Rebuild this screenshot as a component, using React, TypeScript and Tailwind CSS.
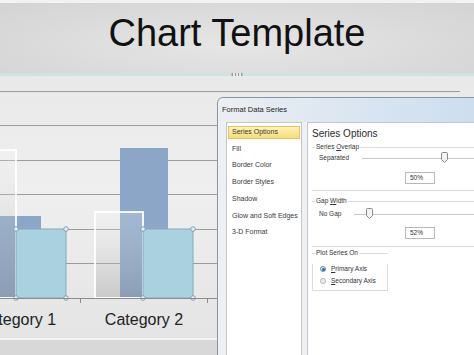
import React from 'react';

// ------------------------------------------------------------
// チャート（スライド上の棒グラフ）
// ------------------------------------------------------------
const gridLines = [91.5, 125.5, 160.5, 194.5, 229.5, 263.5];

const categories = [
  { label: 'Category 1', center: 17, s1: 150, s2: 216 },
  { label: 'Category 2', center: 144, s1: 212, s2: 148 },
];

function SlideChart() {
  return (
    <svg width={474} height={262} viewBox="0 76 474 262" className="block">
      <defs>
        <linearGradient id="glass" x1="0" y1="0" x2="0" y2="1">
          <stop offset="0%" stopColor="#ffffff" stopOpacity={0.2} />
          <stop offset="100%" stopColor="#8a8a8a" stopOpacity={0.32} />
        </linearGradient>
      </defs>

      {gridLines.map((y) => (
        <line key={y} x1={0} x2={460} y1={y} y2={y} stroke="#9c9c9c" strokeWidth={1} />
      ))}

      {categories.map((c) => {
        const x1 = c.center - 49;
        const x2 = c.center - 24;
        const x3 = c.center - 1;
        return (
          <g key={c.label}>
            {/* series 2 */}
            <rect x={x2} y={c.s2} width={48} height={298 - c.s2} fill="#8ba6c7" />
            {/* series 1 (glass) */}
            <rect
              x={x1}
              y={c.s1}
              width={48}
              height={298 - c.s1}
              fill="url(#glass)"
              stroke="#ffffff"
              strokeOpacity={0.9}
              strokeWidth={2}
            />
            {/* series 3 (selected) */}
            <rect x={x3} y={229} width={50} height={69} fill="#a9d1e0" stroke="#86a8bd" strokeWidth={1} />
            {[
              [x3, 229],
              [x3 + 50, 229],
              [x3, 298],
              [x3 + 50, 298],
            ].map(([hx, hy], i) => (
              <circle key={i} cx={hx} cy={hy} r={2.3} fill="#e4edf2" stroke="#7c9ab1" strokeWidth={0.9} />
            ))}
            <text
              x={c.center}
              y={325}
              textAnchor="middle"
              fontSize={16}
              fill="#222"
              fontFamily="'Liberation Sans', Arial, sans-serif"
            >
              {c.label}
            </text>
          </g>
        );
      })}

      <line x1={0} x2={460} y1={298.5} y2={298.5} stroke="#8c8c8c" strokeWidth={1} />
      <line x1={80.5} x2={80.5} y1={298} y2={303} stroke="#8c8c8c" strokeWidth={1} />
      <line x1={207.5} x2={207.5} y1={298} y2={303} stroke="#8c8c8c" strokeWidth={1} />
    </svg>
  );
}

// ------------------------------------------------------------
// ダイアログの部品
// ------------------------------------------------------------
const menuItems = [
  'Series Options',
  'Fill',
  'Border Color',
  'Border Styles',
  'Shadow',
  'Glow and Soft Edges',
  '3-D Format',
];

function SliderThumb() {
  return (
    <svg width={7} height={11} viewBox="0 0 7 11" className="block">
      <path d="M0.5 1.5 Q0.5 0.5 1.5 0.5 H5.5 Q6.5 0.5 6.5 1.5 V7.5 L3.5 10.5 L0.5 7.5 Z" fill="#f3f3f3" stroke="#7d7d7d" strokeWidth={0.9} />
    </svg>
  );
}

function GroupHeader({ children }: { children: React.ReactNode }) {
  return (
    <div className="flex h-[8px] items-center">
      <div className="h-px w-[3px] bg-[#dcdcdc]" />
      <span className="px-[1px] text-[6.5px] leading-[8px] text-[#333]">{children}</span>
      <div className="h-px flex-1 bg-[#dcdcdc]" />
    </div>
  );
}

function SliderRow({ label, thumbAt, wide }: { label: string; thumbAt: number; wide?: boolean }) {
  return (
    <div className="flex h-[12px] items-center pl-[7px]">
      <span className={`text-[6.5px] leading-[12px] text-[#333] ${wide ? 'w-[43px]' : 'w-[35px]'}`}>{label}</span>
      <div className="relative flex h-[12px] flex-1 items-center">
        <div className="h-px w-full bg-[#c8c8c8]" />
        <div className="absolute top-[0px]" style={{ left: thumbAt }}>
          <SliderThumb />
        </div>
      </div>
    </div>
  );
}

function PercentBox({ value }: { value: string }) {
  return (
    <div className="ml-[93px] flex h-[12px] w-[30px] items-center border border-[#b8b8b8] bg-white pl-[4px] text-[6.5px] text-[#333]">
      {value}
    </div>
  );
}

function Radio({ checked, children }: { checked?: boolean; children: React.ReactNode }) {
  return (
    <div className="flex h-[10px] items-center gap-[5px] pl-[7px]">
      <span
        className={`flex h-[6px] w-[6px] items-center justify-center rounded-full border ${
          checked ? 'border-[#6e8fb5] bg-[#dbe6f2]' : 'border-[#b5b5b5] bg-[#eeeeee]'
        }`}
      >
        {checked && <span className="h-[3px] w-[3px] rounded-full bg-[#2f63a8]" />}
      </span>
      <span className="text-[6.5px] leading-[10px] text-[#333]">{children}</span>
    </div>
  );
}

function FormatDialog() {
  return (
    <div className="absolute left-[217px] top-[97px] flex h-[280px] w-[290px] flex-col rounded-tl-[6px] border border-[#8596a9] bg-[linear-gradient(to_bottom,#e3eaf2,#dbe4ee)]">
      {/* タイトルバー */}
      <div className="flex h-[24px] items-center rounded-tl-[6px] bg-[linear-gradient(to_right,#eceff2,#d6e3f1_60%,#cadcee)] pl-[4px]">
        <span className="text-[7.5px] leading-[10px] text-[#1e1e1e]">Format Data Series</span>
      </div>

      <div className="flex flex-1 gap-[5px] bg-[#eef1f4] pl-[8px]">
        {/* 左メニュー */}
        <div className="w-[76px] border border-[#c6c6c6] bg-white px-[1px] pt-[1px]">
          {menuItems.map((item, i) => (
            <div key={item} className="flex h-[16.7px] items-center">
              <div
                className={`flex h-[13px] w-full items-center whitespace-nowrap pl-[3px] text-[7px] text-[#3a3a3a] ${
                  i === 0 ? 'border border-[#e2c469] bg-[linear-gradient(to_bottom,#fdf2b8,#f8dc78)]' : 'border border-transparent'
                }`}
              >
                {item}
              </div>
            </div>
          ))}
        </div>

        {/* 右パネル */}
        <div className="flex-1 border border-[#c6c6c6] bg-white pl-[4px]">
          <div className="mt-[5px] h-[12px] text-[10px] leading-[12px] text-[#2b2b2b]">Series Options</div>

          {/* Series Overlap */}
          <div className="mt-[3px] border-b border-[#dcdcdc] pb-[6px]">
            <GroupHeader>
              Series <span className="underline">O</span>verlap
            </GroupHeader>
            <div className="mt-[1px]">
              <SliderRow label="Separated" thumbAt={79} wide />
            </div>
            <div className="mt-[8px]">
              <PercentBox value="50%" />
            </div>
          </div>

          {/* Gap Width */}
          <div className="mt-[6px] border-b border-[#dcdcdc] pb-[7px]">
            <GroupHeader>
              Gap <span className="underline">W</span>idth
            </GroupHeader>
            <div className="mt-[3px]">
              <SliderRow label="No Gap" thumbAt={12} />
            </div>
            <div className="mt-[7px]">
              <PercentBox value="52%" />
            </div>
          </div>

          {/* Plot Series On */}
          <div className="mt-[2px] w-[76px]">
            <GroupHeader>Plot Series On</GroupHeader>
            <div className="border-x border-b border-[#dcdcdc] pb-[4px]">
              <div className="mt-[7px]">
                <Radio checked>
                  <span className="underline">P</span>rimary Axis
                </Radio>
              </div>
              <div className="mt-[2px]">
                <Radio>
                  <span className="underline">S</span>econdary Axis
                </Radio>
              </div>
            </div>
          </div>
        </div>
      </div>
    </div>
  );
}

// ------------------------------------------------------------
// スライド全体
// ------------------------------------------------------------
export default function App() {
  return (
    <div className="relative h-[355px] w-[474px] overflow-hidden bg-[#e6e6e6] font-['Liberation_Sans',Arial,sans-serif]">
      <div className="h-[3px] bg-[#f2f2f2]" />

      {/* タイトル */}
      <div className="h-[70px] bg-[radial-gradient(ellipse_at_50%_60%,#e6e6e6_0%,#d3d3d3_100%)] pt-[11px] text-center">
        <h1 className="text-[38px] leading-none text-[#111]">Chart Template</h1>
      </div>

      {/* 区切り線 */}
      <div className="flex h-[3px] items-center justify-center bg-[#cfe3e4]">
        <div className="h-[3px] w-[12px] border-x border-[#bfbfbf] bg-[repeating-linear-gradient(to_right,#9a9a9a_0_1px,#e8e8e8_1px_3px)]" />
      </div>

      {/* グラフ */}
      <div className="bg-[linear-gradient(to_bottom,#e9e9e9,#efefef_45%,#e4e4e4)]">
        <SlideChart />
      </div>
      <div className="h-[2px] bg-[#f3f3f3]" />
      <div className="h-[15px] bg-[#d8d8d8]" />

      <FormatDialog />
    </div>
  );
}
